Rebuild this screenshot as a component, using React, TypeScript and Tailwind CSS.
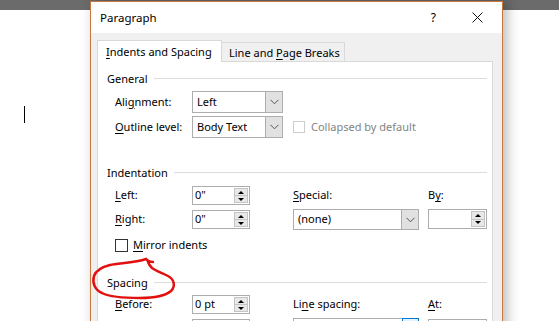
import React from 'react';

const font = { fontFamily: '"Noto Sans", "Open Sans", sans-serif' };

function U({ children }: { children: React.ReactNode }) {
  return <span className="underline underline-offset-2">{children}</span>;
}

function Chevron() {
  return (
    <svg width="9" height="6" viewBox="0 0 9 6" className="block">
      <path d="M0.5 0.8 L4.5 4.8 L8.5 0.8" fill="none" stroke="#555" strokeWidth="1" />
    </svg>
  );
}

function Select({ value, w, h = 22, focused }: { value: string; w: number; h?: number; focused?: boolean }) {
  return (
    <div className="flex border border-[#adadad] bg-white" style={{ width: w, height: h }}>
      <div className="flex-1 flex items-center pl-[4px] text-black">{value}</div>
      <div
        className={
          focused
            ? 'w-[17px] flex items-center justify-center bg-[#e5f1fb] border border-[#0078d7] -my-px -mr-px'
            : 'w-[17px] flex items-center justify-center bg-[#e1e1e1] border-l border-[#adadad]'
        }
      >
        <Chevron />
      </div>
    </div>
  );
}

function Spin({ value, w = 58, h = 19 }: { value: string; w?: number; h?: number }) {
  return (
    <div className="flex border border-[#adadad] bg-white" style={{ width: w, height: h }}>
      <div className="flex-1 flex items-center pl-[2px] text-black">{value}</div>
      <div className="w-[14px] m-px flex flex-col border border-[#c4c4c4] bg-[#e8e8e8]">
        <div className="flex-1 flex items-center justify-center border-b border-[#c4c4c4]">
          <div className="w-0 h-0 border-l-[3px] border-r-[3px] border-b-[3px] border-l-transparent border-r-transparent border-b-black" />
        </div>
        <div className="flex-1 flex items-center justify-center">
          <div className="w-0 h-0 border-l-[3px] border-r-[3px] border-t-[3px] border-l-transparent border-r-transparent border-t-black" />
        </div>
      </div>
    </div>
  );
}

function Heading({ title, className }: { title: string; className?: string }) {
  return (
    <div className={`flex items-center h-4 ${className ?? ''}`}>
      <span className="leading-none">{title}</span>
      <div className="flex-1 h-px bg-[#dcdcdc] ml-[6px]" />
    </div>
  );
}

export default function App() {
  return (
    <div className="relative w-[559px] h-[321px] overflow-hidden bg-white text-[11px] text-black" style={font}>
      <div className="h-[10px] bg-[#6b6b6b]" />
      <div className="ml-[24px] mt-[96px] h-[17px] w-px bg-black" />

      {/* dialog window */}
      <div className="absolute left-[90px] top-[1px] w-[413px] h-[360px] border border-[#c8783c] bg-[#f0f0f0] shadow-[4px_0_12px_rgba(0,0,0,0.28)]">
        <div className="h-[31px] bg-white flex items-center pl-[9px] pr-[19px]">
          <span className="text-[11.5px] leading-none">Paragraph</span>
          <span className="ml-auto text-[12px] leading-none mr-[36px]">?</span>
          <svg width="11" height="11" viewBox="0 0 11 11">
            <path d="M0.5 0.5 L10.5 10.5 M10.5 0.5 L0.5 10.5" stroke="#111" strokeWidth="1" />
          </svg>
        </div>

        <div className="pt-[7px] pl-[6px] pr-[9px]">
          <div className="flex items-end">
            <div className="relative z-10 -mb-px h-[22px] w-[125px] bg-white border border-b-0 border-[#d9d9d9] pl-[8px] flex items-center">
              <span className="leading-none"><U>I</U>ndents and Spacing</span>
            </div>
            <div className="h-[19px] w-[123px] border border-l-0 border-b-0 border-[#d9d9d9] pl-[7px] flex items-center">
              <span className="leading-none">Line and <U>P</U>age Breaks</span>
            </div>
          </div>

          <div className="h-[300px] bg-white border border-[#d9d9d9] pl-[9px] pr-[5px] pt-[8px]">
            <Heading title="General" />
            <div className="ml-[8px] mt-[5px] flex items-center">
              <span className="w-[77px]">Ali<U>g</U>nment:</span>
              <Select value="Left" w={91} />
            </div>
            <div className="ml-[8px] mt-[3px] flex items-center">
              <span className="w-[77px]"><U>O</U>utline level:</span>
              <Select value="Body Text" w={91} />
              <div className="ml-[10px] w-[12px] h-[12px] border border-[#cccccc] bg-white" />
              <span className="ml-[6px] text-[#838383]">Collapsed by default</span>
            </div>

            <Heading title="Indentation" className="mt-[26px]" />
            <div className="ml-[8px] mt-[6px] flex">
              <div className="w-[135px] flex flex-col gap-[5px]">
                <div className="flex items-center">
                  <span className="w-[77px]"><U>L</U>eft:</span>
                  <Spin value={'0"'} />
                </div>
                <div className="flex items-center">
                  <span className="w-[77px]"><U>R</U>ight:</span>
                  <Spin value={'0"'} />
                </div>
              </div>
              <div className="ml-[43px] w-[126px]">
                <div className="h-[19px] flex items-center"><span><U>S</U>pecial:</span></div>
                <div className="mt-[4px]"><Select value="(none)" w={126} h={21} /></div>
              </div>
              <div className="ml-[9px] w-[59px]">
                <div className="h-[19px] flex items-center"><span>B<U>y</U>:</span></div>
                <div className="mt-[4px]"><Spin value="" w={59} h={20} /></div>
              </div>
            </div>
            <div className="ml-[8px] mt-[8px] h-[14px] flex items-center">
              <div className="w-[13px] h-[13px] border border-[#333] bg-white" />
              <span className="ml-[5px]"><U>M</U>irror indents</span>
            </div>

            <Heading title="Spacing" className="mt-[22px]" />
            <div className="ml-[8px] mt-[5px] flex">
              <div className="w-[135px] flex flex-col gap-[5px]">
                <div className="flex items-center">
                  <span className="w-[77px]"><U>B</U>efore:</span>
                  <Spin value="0 pt" />
                </div>
                <div className="flex items-center">
                  <span className="w-[77px]" />
                  <Spin value="" />
                </div>
              </div>
              <div className="ml-[43px] w-[126px]">
                <div className="h-[19px] flex items-center"><span>Li<U>n</U>e spacing:</span></div>
                <div className="mt-[4px]"><Select value="" w={126} h={21} focused /></div>
              </div>
              <div className="ml-[9px] w-[59px]">
                <div className="h-[19px] flex items-center"><span><U>A</U>t:</span></div>
                <div className="mt-[5px]"><Spin value="" w={59} h={20} /></div>
              </div>
            </div>
          </div>
        </div>
      </div>

      {/* red hand-drawn annotation */}
      <svg className="absolute left-0 top-0 pointer-events-none" width="559" height="321">
        <path
          d="M153 262 C150 262 148 262 146 259 C135 263 118 263 110 265 C102 267 96 270 94 276 C92 283 95 290 102 293 C110 297 125 298 140 298 C152 298 165 296 171 291 C176 286 174 279 168 276 C162 273 156 271 152 268 C149 265 148 262 148 262"
          fill="none"
          stroke="#e31010"
          strokeWidth="2.5"
          strokeLinecap="round"
        />
      </svg>
    </div>
  );
}
